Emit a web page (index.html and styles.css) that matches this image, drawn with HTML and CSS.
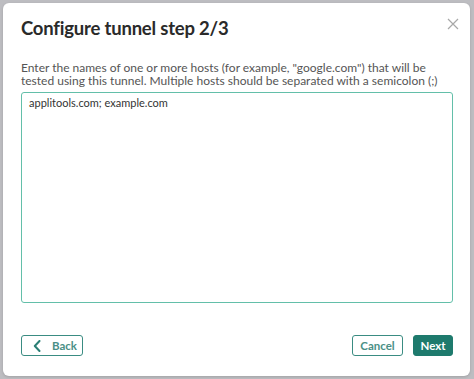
FILE: index.html
```html
<!DOCTYPE html>
<html>
<head>
<meta charset="utf-8">
<link rel="stylesheet" href="styles.css">
</head>
<body>
<div class="dialog">
  <div class="header">
    <h1 class="title">Configure tunnel step 2/3</h1>
    <button class="close" aria-label="Close">
      <svg width="12" height="12" viewBox="0 0 12 12"><path d="M1 1 L11 11 M11 1 L1 11" stroke="#a8a8a8" stroke-width="1.2" fill="none"/></svg>
    </button>
  </div>
  <p class="desc">Enter the names of one or more hosts (for example, "google.com") that will be tested using this tunnel. Multiple hosts should be separated with a semicolon (;)</p>
  <div class="field">applitools.com; example.com</div>
  <div class="footer">
    <button class="btn btn-outline back">
      <svg class="chev" width="8" height="12" viewBox="0 0 8 12"><path d="M6.5 1 L1.8 6 L6.5 11" stroke="#2b7f75" stroke-width="2" fill="none" stroke-linecap="round" stroke-linejoin="round"/></svg>
      <span>Back</span>
    </button>
    <div class="spacer"></div>
    <button class="btn btn-outline cancel">Cancel</button>
    <button class="btn btn-primary">Next</button>
  </div>
</div>
</body>
</html>
```
FILE: styles.css
```css
html, body {
  margin: 0;
  padding: 0;
  height: 100%;
}
body {
  background: #bdbdc1;
  font-family: Lato, "Open Sans", sans-serif;
  overflow: hidden;
}
.dialog {
  margin: 3px 0 0 3px;
  width: 467px;
  height: 373px;
  box-sizing: border-box;
  background: #fff;
  border-radius: 6px;
  padding: 0 17px 0 18px;
  display: flex;
  flex-direction: column;
  box-shadow: 0 1px 3px rgba(0,0,0,0.15);
}
.header {
  display: flex;
  align-items: flex-start;
  justify-content: space-between;
  padding-top: 12px;
}
.title {
  margin: 0;
  font-size: 18.5px;
  font-weight: 700;
  color: #2a2a2a;
  line-height: 26px;
  letter-spacing: -0.2px;
}
.close {
  border: none;
  background: none;
  padding: 0;
  margin: 3px -6px 0 0;
  width: 12px;
  height: 12px;
  display: flex;
}
.desc {
  margin: 20px 0 0 0;
  font-size: 12px;
  line-height: 13px;
  color: #555;
  letter-spacing: 0;
}
.field {
  margin-top: 5px;
  height: 211px;
  box-sizing: border-box;
  border: 1px solid #63bfa9;
  border-radius: 3px;
  padding: 3px 7px;
  font-size: 11px;
  color: #333;
}
.footer {
  display: flex;
  align-items: center;
  margin-top: 32px;
  gap: 10px;
}
.spacer { flex: 1; }
.btn {
  height: 21px;
  box-sizing: border-box;
  border-radius: 3px;
  font-family: Lato, "Open Sans", sans-serif;
  font-size: 11.5px;
  font-weight: 700;
  padding: 0 10px;
  display: flex;
  align-items: center;
  cursor: pointer;
}
.btn-outline {
  background: #fff;
  border: 1px solid #3a8c82;
  color: #4a8f86;
}
.chev { flex-shrink: 0; }
.back {
  width: 62px;
  gap: 11px;
  padding-left: 11px;
}
.cancel {
  width: 51px;
  justify-content: center;
  padding: 0;
}
.btn-primary {
  width: 40px;
  justify-content: center;
  padding: 0;
  background: #1e7a6d;
  border: 1px solid #1e7a6d;
  color: #fff;
}
```
